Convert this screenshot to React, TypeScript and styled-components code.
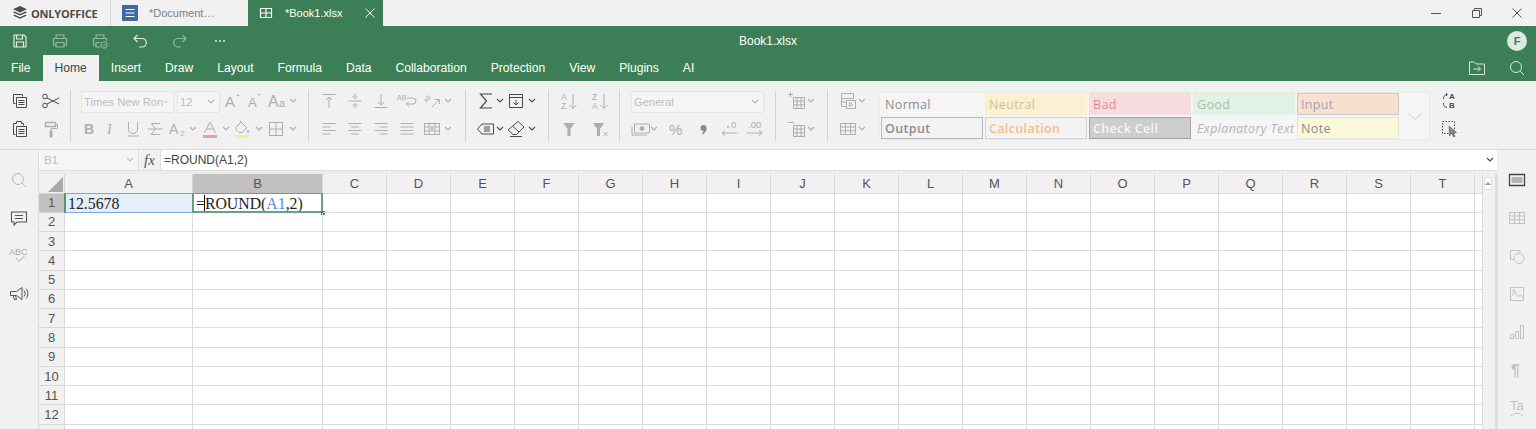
import * as React from "react";
import styled, { createGlobalStyle } from "styled-components";

const green = "#3c7f56";
const panel = "#f1f1f1";
const faded = "#aeaeae";
const dark = "#4a4a4a";

const GlobalStyle = createGlobalStyle`
  html, body { margin: 0; padding: 0; background: #fff; }
  body { font-family: "Liberation Sans", Arial, sans-serif; overflow: hidden; }
  * { box-sizing: border-box; }
`;

const Shell = styled.div`
  width: 1536px;
  height: 429px;
  display: flex;
  flex-direction: column;
  overflow: hidden;
`;

/* window tabs */
const WindowBar = styled.div`
  height: 26px;
  flex: none;
  display: flex;
  background: ${panel};
`;
const Logo = styled.div`
  width: 111px;
  display: flex;
  align-items: center;
  padding-left: 12px;
  gap: 3px;
  border-right: 1px solid #dcdcdc;
  font-size: 11px;
  font-weight: bold;
  color: #4b4b4b;
  font-family: "Open Sans", sans-serif;
  letter-spacing: -0.2px;
`;
const DocTab = styled.div<{ $active?: boolean }>`
  width: ${(p) => (p.$active ? 135 : 137)}px;
  display: flex;
  align-items: center;
  padding-left: 11px;
  gap: ${(p) => (p.$active ? 12 : 11)}px;
  font-size: 11px;
  color: ${(p) => (p.$active ? "#fff" : "#808080")};
  background: ${(p) => (p.$active ? green : panel)};
`;
const TabName = styled.span`
  flex: 1;
`;
const CloseTab = styled.span`
  display: flex;
  margin-right: 7px;
`;
const WinControls = styled.div`
  margin-left: auto;
  display: flex;
  gap: 2.5px;
`;
const WinBtn = styled.div`
  width: 38px;
  display: flex;
  align-items: center;
  justify-content: center;
  color: #555;
`;

/* green header */
const Header = styled.div`
  height: 55px;
  flex: none;
  background: ${green};
  color: #fff;
`;
const QuickRow = styled.div`
  height: 29px;
  display: flex;
  align-items: center;
  position: relative;
`;
const QuickBtn = styled.div<{ $off?: boolean }>`
  width: 40px;
  display: flex;
  justify-content: center;
  color: #fff;
  opacity: ${(p) => (p.$off ? 0.45 : 0.85)};
`;
const DocTitle = styled.div`
  position: absolute;
  left: 0;
  right: 0;
  text-align: center;
  font-size: 12px;
  pointer-events: none;
`;
const Avatar = styled.div`
  margin-left: auto;
  margin-right: 9px;
  width: 20px;
  height: 20px;
  border-radius: 50%;
  background: #dce9e1;
  color: ${green};
  font-size: 11px;
  font-weight: bold;
  display: flex;
  align-items: center;
  justify-content: center;
`;
const MenuRow = styled.div`
  height: 26px;
  display: flex;
  align-items: stretch;
`;
const MenuTab = styled.div<{ $active?: boolean; $first?: boolean }>`
  padding: 0 12px 0 ${(p) => (p.$first ? 11 : 12)}px;
  display: flex;
  align-items: center;
  font-size: 12.1px;
  color: ${(p) => (p.$active ? "#444" : "#fff")};
  background: ${(p) => (p.$active ? panel : "transparent")};
`;
const MenuRight = styled.div`
  margin-left: auto;
  display: flex;
  align-items: center;
  padding-right: 11px;
  gap: 23px;
  opacity: 0.8;
`;

/* toolbar */
const Toolbar = styled.div`
  height: 69px;
  flex: none;
  display: flex;
  padding-top: 6px;
  background: ${panel};
  border-bottom: 1px solid #dcdcdc;
`;
const Group = styled.div<{ $w: number; $pad?: number }>`
  width: ${(p) => p.$w}px;
  flex: none;
  padding-left: ${(p) => p.$pad ?? 0}px;
`;
const ToolRow = styled.div`
  height: 28px;
  display: flex;
  align-items: center;
`;
const Sep = styled.div`
  width: 1px;
  flex: none;
  height: 51px;
  margin-top: 3px;
  background: #d2d2d2;
`;
const Tool = styled.div<{ $w: number; $c?: string }>`
  width: ${(p) => p.$w}px;
  flex: none;
  display: flex;
  justify-content: center;
  align-items: center;
  color: ${(p) => p.$c ?? faded};
  svg { flex: none; }
`;
const Select = styled.div<{ $w: number; $gap?: number; $ml?: number }>`
  width: ${(p) => p.$w}px;
  height: 22px;
  margin: 2px ${(p) => p.$gap ?? 0}px 0 ${(p) => p.$ml ?? 0}px;
  flex: none;
  display: flex;
  align-items: center;
  justify-content: space-between;
  padding: 0 4px 0 2px;
  background: #f5f5f5;
  border: 1px solid #e6e6e6;
  border-radius: 2px;
  font-size: 11.2px;
  color: #bdbdbd;
  white-space: nowrap;
  overflow: hidden;
`;
const Gallery = styled.div`
  width: 551px;
  height: 48px;
  margin: 5px 0 0 2px;
  flex: none;
  display: flex;
  background: #f5f5f5;
  border: 1px solid #e9e9e9;
`;
const StyleGrid = styled.div`
  width: 520px;
  padding: 0 0 0 1px;
  display: grid;
  grid-template-columns: repeat(5, 102px);
  grid-auto-rows: 22px;
  column-gap: 2px;
  row-gap: 2px;
  align-content: center;
`;
const StyleCell = styled.div<{ $bg?: string; $fg: string; $bd?: string; $b?: boolean; $i?: boolean }>`
  display: flex;
  align-items: center;
  padding-left: 3px;
  font-family: "Open Sans", sans-serif;
  font-size: 12.5px;
  letter-spacing: 0.35px;
  white-space: nowrap;
  overflow: hidden;
  background: ${(p) => p.$bg ?? "transparent"};
  color: ${(p) => p.$fg};
  border: 1px solid ${(p) => p.$bd ?? "transparent"};
  font-weight: ${(p) => (p.$b ? 600 : 400)};
  font-style: ${(p) => (p.$i ? "italic" : "normal")};
`;
const GalleryMore = styled.div`
  flex: 1;
  display: flex;
  align-items: center;
  justify-content: center;
  color: #cfcfcf;
`;

/* sheet area */
const Workspace = styled.div`
  flex: 1;
  display: flex;
  min-height: 0;
  background: ${panel};
`;
const Rail = styled.div<{ $w: number; $line?: boolean }>`
  width: ${(p) => p.$w}px;
  flex: none;
  display: flex;
  flex-direction: column;
  align-items: center;
  gap: 18px;
  padding-top: 20px;
  border-right: ${(p) => (p.$line ? "1px solid #dedede" : "none")};
`;
const RailIcon = styled.div<{ $c?: string }>`
  height: 20px;
  display: flex;
  align-items: center;
  color: ${(p) => p.$c ?? "#c2c2c2"};
`;
const Main = styled.div`
  width: 1459px;
  flex: none;
  display: flex;
  flex-direction: column;
`;
const FormulaBar = styled.div`
  height: 21px;
  flex: none;
  display: flex;
  margin-right: 1px;
  background: #fff;
  border-bottom: 1px solid #e0e0e0;
`;
const NameBox = styled.div`
  width: 99px;
  display: flex;
  align-items: center;
  justify-content: space-between;
  padding: 0 4px 0 5px;
  background: #f5f5f5;
  color: #bcbcbc;
  font-size: 11.5px;
`;
const FxBox = styled.div`
  width: 23px;
  display: flex;
  align-items: center;
  justify-content: center;
  background: ${panel};
  border-left: 1px solid #dedede;
  border-right: 1px solid #dedede;
  font-family: "Liberation Serif", serif;
  font-style: italic;
  font-size: 15px;
  color: #555;
`;
const FormulaText = styled.div`
  flex: 1;
  display: flex;
  align-items: center;
  justify-content: space-between;
  padding: 0 3px 0 3px;
  font-size: 12px;
  color: #444;
`;
const Gap = styled.div`
  height: 3px;
  flex: none;
  background: #ececec;
`;
const SheetRow = styled.div`
  flex: 1;
  min-height: 0;
  display: flex;
`;
const Sheet = styled.div`
  width: 1444px;
  flex: none;
  background: #fff;
  overflow: hidden;
`;
const GridRow = styled.div<{ $head?: boolean }>`
  display: flex;
  height: ${(p) => (p.$head ? 19.5 : 19.27)}px;
`;
const HeadCell = styled.div<{ $w: number; $sel?: boolean }>`
  width: ${(p) => p.$w}px;
  flex: none;
  display: flex;
  align-items: center;
  justify-content: center;
  font-size: 13px;
  color: #555;
  background: ${(p) => (p.$sel ? "#c1c1c1" : panel)};
  border-right: 1px solid #d8d8d8;
  border-bottom: 1px solid #d8d8d8;
`;
const Corner = styled(HeadCell)`
  align-items: flex-end;
  justify-content: flex-end;
  padding: 0 1px 1px 0;
`;
const CornerMark = styled.div`
  width: 0;
  height: 0;
  border-style: solid;
  border-width: 0 0 15px 15px;
  border-color: transparent transparent #a9a9a9 transparent;
`;
const Cell = styled.div<{ $w: number }>`
  width: ${(p) => p.$w}px;
  flex: none;
  position: relative;
  border-right: 1px solid #dcdcdc;
  border-bottom: 1px solid #dcdcdc;
  font-family: "Liberation Serif", serif;
  font-size: 15.8px;
  line-height: 19px;
  padding-left: 3px;
  color: #222;
  white-space: nowrap;
`;
const RefCell = styled(Cell)`
  background: #e5eefb;
`;
const RefOutline = styled.div`
  position: absolute;
  inset: -1px -1px -1px -1px;
  border: 1px solid #7ba5ea;
  border-left: 2px solid #5a9474;
  pointer-events: none;
`;
const EditOutline = styled.div`
  position: absolute;
  inset: -1px -1px -1px -1px;
  border: 2px solid #6a9f82;
  border-top-width: 1px;
  pointer-events: none;
`;
const FillHandle = styled.div`
  position: absolute;
  right: -4px;
  bottom: -4px;
  width: 4px;
  height: 4px;
  background: #3c7f56;
`;
const Caret = styled.span`
  display: inline-block;
  position: relative;
  width: 0;
  height: 0;
  &::after {
    content: "";
    position: absolute;
    left: -1px;
    top: -14px;
    width: 1.5px;
    height: 18px;
    background: #111;
  }
`;
const RefText = styled.span`
  color: #5b8fe0;
`;
const ScrollBar = styled.div`
  width: 15px;
  flex: none;
  padding: 3px 3px 0 1px;
  background: ${panel};
  border-right: 3px solid #dedede;
`;
const ScrollUp = styled.div`
  height: 13px;
  background: #fafafa;
  border: 1px solid #e4e4e4;
  display: flex;
  align-items: center;
  justify-content: center;
  &::before {
    content: "";
    border-style: solid;
    border-width: 0 3px 3px 3px;
    border-color: transparent transparent #999 transparent;
  }
`;

/* icons */
const Svg = ({ s = 20, w, children, sw = 1 }: { s?: number; w?: number; children: React.ReactNode; sw?: number }) => (
  <svg width={w ?? s} height={s} viewBox={`0 0 ${w ?? s} ${s}`} fill="none" stroke="currentColor" strokeWidth={sw}>
    {children}
  </svg>
);
const Txt = (p: { x: number; y: number; size: number; children: React.ReactNode; weight?: any; style?: any; family?: string; rotate?: number }) => (
  <text
    x={p.x}
    y={p.y}
    fontSize={p.size}
    fontWeight={p.weight}
    fontStyle={p.style}
    fill="currentColor"
    stroke="none"
    fontFamily={p.family ?? "Liberation Sans"}
    transform={p.rotate ? `rotate(${p.rotate} ${p.x} ${p.y})` : undefined}
  >
    {p.children}
  </text>
);

const Chevron = () => (
  <svg width="8" height="6" viewBox="0 0 8 6" fill="none" stroke="currentColor" strokeWidth="1.1">
    <path d="M1 1l3 3 3-3" />
  </svg>
);
const ChevronTool = styled(Tool).attrs({ children: <Chevron /> })``;

const Icons = {
  layers: (
    <svg width="16" height="16" viewBox="0 0 16 16" fill="#4b4b4b">
      <path d="M8 1l7 3.2L8 7.4 1 4.2z" />
      <path d="M2.6 6.6L8 9l5.4-2.4L15 7.4 8 10.6 1 7.4z" />
      <path d="M2.6 9.8L8 12.2l5.4-2.4 1.6.8L8 13.8 1 10.6z" />
    </svg>
  ),
  docBlue: (
    <svg width="16" height="16" viewBox="0 0 16 16">
      <rect width="16" height="16" rx="1" fill="#42699e" />
      <path d="M3.5 4.5h9M3.5 8h9M3.5 11.5h9" stroke="#fff" strokeWidth="1.2" />
    </svg>
  ),
  bookTable: (
    <Svg s={14}>
      <path d="M1.5 2.5h11v9h-11zM1.5 7h11M7 2.5v9" strokeWidth="1.2" />
    </Svg>
  ),
  x: (
    <Svg s={12}>
      <path d="M1.5 1.5l9 9M10.5 1.5l-9 9" />
    </Svg>
  ),
  min: (
    <Svg s={12}>
      <path d="M1 6.5h10" />
    </Svg>
  ),
  restore: (
    <Svg s={12}>
      <path d="M1.5 3.5h7v7h-7zM3.5 3.5v-2h7v7h-2" />
    </Svg>
  ),
  save: (
    <Svg s={16}>
      <path d="M2 2h10l2 2v10H2zM4.5 2v4h6V2M4.5 14V9h7v5" strokeWidth="1.2" />
    </Svg>
  ),
  print: (
    <Svg s={16}>
      <path d="M4 5V2h8v3M4 12H1.5V5.5h13V12H12M4 9.5h8V14H4z" strokeWidth="1.2" />
    </Svg>
  ),
  qprint: (
    <Svg s={16}>
      <path d="M4 5V2h8v3M4 12H1.5V5.5h13V8M4 9.5h4M4 9.5V14h4" strokeWidth="1.2" />
      <circle cx="12" cy="12" r="3.2" />
      <path d="M10.5 12l1.2 1.2 2-2.2" />
    </Svg>
  ),
  undo: (
    <Svg s={16}>
      <path d="M5.5 2L2 5.5 5.5 9M2 5.5h8a4 4 0 010 8.5H7" strokeWidth="1.2" />
    </Svg>
  ),
  redo: (
    <Svg s={16}>
      <path d="M10.5 2L14 5.5 10.5 9M14 5.5H6a4 4 0 000 8.5h3" strokeWidth="1.2" />
    </Svg>
  ),
  dots: (
    <svg width="12" height="4" viewBox="0 0 12 4" fill="currentColor">
      <circle cx="2" cy="2" r="1" />
      <circle cx="6" cy="2" r="1" />
      <circle cx="10" cy="2" r="1" />
    </svg>
  ),
  folder: (
    <Svg s={18}>
      <path d="M1.5 3h5l1.5 2h8.5v10.5h-15zM5.5 10h7M10 7.5l2.5 2.5-2.5 2.5" />
    </Svg>
  ),
  search: (
    <Svg s={16}>
      <circle cx="7" cy="7" r="5.5" />
      <path d="M11 11l4 4" />
    </Svg>
  ),
  copy: (
    <Svg>
      <path d="M5.5 12.5h-2v-9h9v2" />
      <path d="M6.5 6.5h10v10h-10z" />
      <path d="M8.5 9.5h6M8.5 11.5h6M8.5 13.5h6" />
    </Svg>
  ),
  paste: (
    <Svg>
      <path d="M5.5 15.5h-2v-11h3v-2h5v2h2v2" />
      <path d="M6.5 7.5h10v10h-10z" />
      <path d="M8.5 10.5h6M8.5 12.5h6M8.5 14.5h6" />
    </Svg>
  ),
  scissors: (
    <Svg>
      <circle cx="4" cy="5.5" r="2.3" />
      <circle cx="4" cy="14.5" r="2.3" />
      <path d="M6 7l12 6M6 13l12-6" />
    </Svg>
  ),
  roller: (
    <Svg>
      <path d="M4.5 3.5h10v4h-10z" strokeWidth="1.4" />
      <path d="M14.5 5.5h2v4h-6.5v3" />
      <path d="M9 12h2v6H9z" fill="currentColor" />
    </Svg>
  ),
  growA: (
    <Svg>
      <Txt x={2} y={16} size={15}>A</Txt>
      <path d="M13.5 5h3l-1.5-2z" fill="currentColor" stroke="none" />
    </Svg>
  ),
  shrinkA: (
    <Svg>
      <Txt x={3} y={16} size={13}>A</Txt>
      <path d="M12.5 3h3l-1.5 2z" fill="currentColor" stroke="none" />
    </Svg>
  ),
  changeCase: (
    <Svg>
      <Txt x={1} y={16} size={16}>A</Txt>
      <Txt x={12} y={16} size={11}>a</Txt>
    </Svg>
  ),
  bold: (
    <Svg>
      <Txt x={5} y={15} size={14} weight="bold">B</Txt>
    </Svg>
  ),
  italic: (
    <Svg>
      <Txt x={6} y={15} size={14} style="italic" family="Liberation Serif">I</Txt>
    </Svg>
  ),
  underline: (
    <Svg>
      <path d="M5.5 3v7.5a4.5 4 0 009 0V3M4.5 17h11" />
    </Svg>
  ),
  strike: (
    <Svg>
      <path d="M15 4.5H6.5L10.5 10 6 15.5h9M2.5 10h15" />
    </Svg>
  ),
  sub: (
    <Svg>
      <Txt x={1} y={15} size={14}>A</Txt>
      <Txt x={12} y={17} size={8}>2</Txt>
    </Svg>
  ),
  fontColor: (
    <svg width="20" height="20" viewBox="0 0 20 20" fill="none" stroke="currentColor">
      <path d="M4.5 14L10 3l5.5 11M6.5 10h7" />
      <rect x="3" y="16" width="14" height="3" fill="#f59aa0" stroke="none" />
    </svg>
  ),
  fillColor: (
    <svg width="20" height="20" viewBox="0 0 20 20" fill="none" stroke="currentColor">
      <path d="M9 3l6 6-5 4.5H7L4 10.5V8.5zM8 1.5l2 2.5" />
      <circle cx="16" cy="12.5" r="1.3" fill="currentColor" stroke="none" />
      <rect x="3" y="16" width="14" height="3" fill="#f4f08a" stroke="none" />
    </svg>
  ),
  borders: (
    <Svg>
      <path d="M3.5 3.5h13v13h-13zM10 3.5v13M3.5 10h13" />
    </Svg>
  ),
  alignTop: (
    <Svg>
      <path d="M3.5 3.5h13M10 17V6.5M7 9l3-3 3 3" />
    </Svg>
  ),
  alignMid: (
    <Svg>
      <path d="M3.5 10h13M10 2.5V7M7.5 5l2.5 2.5L12.5 5M10 17.5V13M7.5 15l2.5-2.5 2.5 2.5" />
    </Svg>
  ),
  alignBot: (
    <Svg>
      <path d="M3.5 16.5h13M10 3v10.5M7 11l3 3 3-3" />
    </Svg>
  ),
  wrap: (
    <Svg>
      <Txt x={0} y={9} size={7}>AB</Txt>
      <path d="M10 7h6a2.5 2.5 0 010 6H9.5M12 10.5L9.5 13l2.5 2.5" />
    </Svg>
  ),
  orient: (
    <Svg>
      <Txt x={4} y={12} size={7} rotate={-45}>ab</Txt>
      <path d="M10 16l7-7M13 8.500h4.500V13" />
    </Svg>
  ),
  left: (
    <Svg>
      <path d="M3.5 4.5h13M3.5 8h8M3.5 11.5h13M3.5 15h8" />
    </Svg>
  ),
  center: (
    <Svg>
      <path d="M3.5 4.5h13M6 8h8M3.5 11.5h13M6 15h8" />
    </Svg>
  ),
  right: (
    <Svg>
      <path d="M3.5 4.5h13M8.5 8h8M3.5 11.5h13M8.5 15h8" />
    </Svg>
  ),
  justify: (
    <Svg>
      <path d="M3.5 4.5h13M3.5 8h13M3.5 11.5h13M3.5 15h13" />
    </Svg>
  ),
  merge: (
    <Svg>
      <path d="M2.5 4.5h15v11h-15zM2.5 8h15M2.5 12h15M7 4.5V8M13 4.5V8M7 12v3.5M13 12v3.5M6 10h8" />
    </Svg>
  ),
  sigma: (
    <Svg>
      <path d="M15 4V3H4.5l6 7-6 7H15v-1" strokeWidth="1.2" />
    </Svg>
  ),
  fill: (
    <Svg>
      <path d="M3.5 3.5h13v13h-13zM3.5 6.5h13M10 9v5M7.5 11.5l2.5 2.5 2.5-2.5" />
    </Svg>
  ),
  tag: (
    <Svg>
      <path d="M6 5h11.5v10H6L1.5 10zM8 8h6M8 10h6M8 12h6" />
    </Svg>
  ),
  eraser: (
    <Svg>
      <path d="M12 2.5l6 5.5-7.5 7.5H7L2 11zM7 7.5l6 5.5M4 17.5h12" />
    </Svg>
  ),
  sortAZ: (
    <Svg>
      <Txt x={1} y={9} size={8.5}>A</Txt>
      <Txt x={1} y={18} size={8.5}>Z</Txt>
      <path d="M13 3v14M9.5 14l3.5 3.5 3.5-3.5" />
    </Svg>
  ),
  sortZA: (
    <Svg>
      <Txt x={1} y={9} size={8.5}>Z</Txt>
      <Txt x={1} y={18} size={8.5}>A</Txt>
      <path d="M13 3v14M9.5 14l3.5 3.5 3.5-3.5" />
    </Svg>
  ),
  funnel: (
    <svg width="20" height="20" viewBox="0 0 20 20" fill="currentColor">
      <path d="M3.5 4h11L10.5 10v7h-3v-7z" />
    </svg>
  ),
  funnelX: (
    <svg width="20" height="20" viewBox="0 0 20 20" fill="currentColor">
      <path d="M2 4h11L9 10v7H6v-7z" />
      <path d="M12.5 13l4 4M16.5 13l-4 4" stroke="currentColor" fill="none" />
    </svg>
  ),
  money: (
    <Svg>
      <path d="M4.5 5h15v9h-15z" />
      <path d="M2 7.5V16h15" />
      <circle cx="12" cy="9.5" r="2" fill="currentColor" />
    </Svg>
  ),
  percent: (
    <Svg>
      <Txt x={2} y={15.5} size={15}>%</Txt>
    </Svg>
  ),
  comma: (
    <svg width="20" height="20" viewBox="0 0 20 20" fill="currentColor">
      <circle cx="10.5" cy="9" r="3" />
      <path d="M13.5 9c0 3-2 5.5-4 6.5l-.5-1c1.5-1 1.5-2.5 1.5-3z" />
    </svg>
  ),
  decDec: (
    <Svg s={20} w={22}>
      <Txt x={12} y={9} size={9.5}>0</Txt>
      <circle cx="9" cy="8" r=".6" fill="currentColor" />
      <path d="M18 14H3M6 11.5L3 14l3 2.5" />
    </Svg>
  ),
  incDec: (
    <Svg s={20} w={22}>
      <Txt x={4} y={9} size={9.5}>.00</Txt>
      <path d="M3 14h15M15 11.5l3 2.5-3 2.5" />
    </Svg>
  ),
  insert: (
    <Svg>
      <path d="M6.5 6.5h11v11h-11zM6.5 10h11M6.5 13.8h11M10 6.5v11M14 6.5v11M1 3.5h5M3.5 1v5" />
    </Svg>
  ),
  remove: (
    <Svg>
      <path d="M6.5 6.5h11v11h-11zM6.5 10h11M6.5 13.8h11M10 6.5v11M14 6.5v11M1 3.5h6" />
    </Svg>
  ),
  cond: (
    <Svg>
      <path d="M3.5 2.5h12v5h-12zM3.5 7.5v8h5" />
      <path d="M3.5 11h5" />
      <path d="M8.5 9.5h9v8h-9zM11.5 11.5l3 2-3 2z" />
    </Svg>
  ),
  table: (
    <Svg>
      <path d="M2.5 4.5h15v11h-15zM2.5 8h15M2.5 11.8h15M7.5 4.5v11M12.5 4.5v11" />
    </Svg>
  ),
  caseSwap: (
    <Svg>
      <path d="M7 3.5C4.5 4 3 6 3.5 8M7 16.5C4.5 16 3 14 3.5 12M6 2l1.5 1.5L6 5" />
      <Txt x={9} y={8} size={8} weight="bold">A</Txt>
      <Txt x={9} y={17} size={8} weight="bold">B</Txt>
    </Svg>
  ),
  selectAll: (
    <svg width="20" height="20" viewBox="0 0 20 20" fill="none" stroke="currentColor">
      <path d="M2.5 2.5h12v12h-12z" strokeDasharray="1.5 1.5" />
      <path d="M9 7l7.5 6.5-3.2.3 1.8 3.5-1.5.7-1.7-3.5L9.5 17z" fill="#888" stroke="#555" strokeWidth=".6" />
    </svg>
  ),
  comment: (
    <Svg>
      <path d="M2.5 4h15v10H8l-3 3v-3H2.5zM6 7.5h8M6 10.5h8" strokeWidth="1.1" />
    </Svg>
  ),
  spell: (
    <Svg>
      <Txt x={0} y={9} size={9}>ABC</Txt>
      <path d="M7 12l3 3.5 5.5-5.5" />
    </Svg>
  ),
  megaphone: (
    <Svg>
      <path d="M1.5 7.5h6L13 3.5v12L7.5 11.5h-6zM4 11.5l1.5 4h2L6.5 11.5" />
      <path d="M15 6.5c1.5 1.5 1.5 4.5 0 6M17 4.5c2.5 3 2.5 7.5 0 10" />
    </Svg>
  ),
  cellPanel: (
    <Svg>
      <path d="M2.5 4.5h15v11h-15z" strokeWidth="1.3" />
      <path d="M5 7.5h10v5H5z" fill="currentColor" opacity=".35" />
    </Svg>
  ),
  tablePanel: (
    <Svg>
      <path d="M2.5 4.5h15v11h-15zM2.5 8h15M2.5 11.8h15M7.5 4.5v11M12.5 4.5v11" />
    </Svg>
  ),
  shapes: (
    <Svg>
      <path d="M8 13.5H3.5v-9H13V8" />
      <circle cx="12" cy="12.5" r="5" />
    </Svg>
  ),
  image: (
    <Svg>
      <path d="M3.5 3.5h13v13h-13zM3.5 13l4-4 4 3.5 2-1.5 3 3" />
      <circle cx="7" cy="7" r="1.2" />
    </Svg>
  ),
  chart: (
    <Svg>
      <path d="M3.5 12.5h3v4h-3zM8.5 9.5h3v7h-3zM13.5 3.5h3v13h-3z" />
    </Svg>
  ),
  para: (
    <Svg>
      <Txt x={4} y={16} size={16} weight="bold">¶</Txt>
    </Svg>
  ),
  textArt: (
    <Svg>
      <Txt x={3} y={12} size={13}>Ta</Txt>
      <path d="M4 18c3-3.5 9-3.5 12 0" />
    </Svg>
  ),
};

type IconName = keyof typeof Icons;

const T = ({ w, i, c }: { w: number; i: IconName; c?: string }) => (
  <Tool $w={w} $c={c}>
    {Icons[i]}
  </Tool>
);

const menuItems = ["File", "Home", "Insert", "Draw", "Layout", "Formula", "Data", "Collaboration", "Protection", "View", "Plugins", "AI"];
const columns = "CDEFGHIJKLMNOPQRST".split("");
const rowCount = 13;
const leftRail: IconName[] = ["search", "comment", "spell", "megaphone"];
const rightRail: IconName[] = ["tablePanel", "shapes", "image", "chart", "para", "textArt"];

const cellStyles: any[] = [
  { n: "Normal", fg: "#8d8d8d" },
  { n: "Neutral", fg: "#d3c08e", bg: "#faf0d2" },
  { n: "Bad", fg: "#dc8d94", bg: "#f8dde0" },
  { n: "Good", fg: "#9cc3a4", bg: "#e1f1e5" },
  { n: "Input", fg: "#a6a0b8", bg: "#f7e0cd", bd: "#c9c9c9" },
  { n: "Output", fg: "#8c8c8c", bg: "#f3f3f3", bd: "#bababa", b: true },
  { n: "Calculation", fg: "#f6bd88", bg: "#f3f3f3", bd: "#d4d4d4", b: true },
  { n: "Check Cell", fg: "#f6f6f6", bg: "#cdcdcd", bd: "#a4a4a4", b: true },
  { n: "Explanatory Text", fg: "#b4b4b4", i: true },
  { n: "Note", fg: "#8c8c8c", bg: "#fafad8", bd: "#e4e4e4" },
];

const App = () => (
  <React.Fragment>
    <GlobalStyle />
    <Shell>
      <WindowBar>
        <Logo>
          {Icons.layers}
          ONLYOFFICE
        </Logo>
        <DocTab>
          {Icons.docBlue}
          <TabName>*Document…</TabName>
        </DocTab>
        <DocTab $active>
          {Icons.bookTable}
          <TabName>*Book1.xlsx</TabName>
          <CloseTab>{Icons.x}</CloseTab>
        </DocTab>
        <WinControls>
          <WinBtn>{Icons.min}</WinBtn>
          <WinBtn>{Icons.restore}</WinBtn>
          <WinBtn>{Icons.x}</WinBtn>
        </WinControls>
      </WindowBar>

      <Header>
        <QuickRow>
          <QuickBtn>{Icons.save}</QuickBtn>
          <QuickBtn $off>{Icons.print}</QuickBtn>
          <QuickBtn $off>{Icons.qprint}</QuickBtn>
          <QuickBtn>{Icons.undo}</QuickBtn>
          <QuickBtn $off>{Icons.redo}</QuickBtn>
          <QuickBtn>{Icons.dots}</QuickBtn>
          <DocTitle>Book1.xlsx</DocTitle>
          <Avatar>F</Avatar>
        </QuickRow>
        <MenuRow>
          {menuItems.map((m, i) => (
            <MenuTab key={m} $first={i === 0} $active={m === "Home"}>
              {m}
            </MenuTab>
          ))}
          <MenuRight>
            {Icons.folder}
            {Icons.search}
          </MenuRight>
        </MenuRow>
      </Header>

      <Toolbar>
        <Group $w={70} $pad={4}>
          <ToolRow>
            <T w={31} i="copy" c={dark} />
            <T w={31} i="scissors" c={dark} />
          </ToolRow>
          <ToolRow>
            <T w={31} i="paste" c={dark} />
            <T w={31} i="roller" />
          </ToolRow>
        </Group>
        <Sep />
        <Group $w={237} $pad={7}>
          <ToolRow>
            <Select $w={93} $ml={3} $gap={3}>
              Times New Ron
              <Chevron />
            </Select>
            <Select $w={43}>
              12
              <Chevron />
            </Select>
            <T w={25} i="growA" />
            <T w={20} i="shrinkA" />
            <T w={24} i="changeCase" />
            <ChevronTool $w={8} />
          </ToolRow>
          <ToolRow>
            <T w={22} i="bold" />
            <T w={22} i="italic" />
            <T w={22} i="underline" />
            <T w={22} i="strike" />
            <T w={23} i="sub" />
            <ChevronTool $w={8} />
            <T w={26} i="fontColor" />
            <ChevronTool $w={6} />
            <T w={26} i="fillColor" />
            <ChevronTool $w={8} />
            <T w={26} i="borders" />
            <ChevronTool $w={8} />
          </ToolRow>
        </Group>
        <Sep />
        <Group $w={156} $pad={7}>
          <ToolRow>
            <T w={26} i="alignTop" />
            <T w={26} i="alignMid" />
            <T w={26} i="alignBot" />
            <T w={26} i="wrap" />
            <T w={24} i="orient" />
            <ChevronTool $w={8} />
          </ToolRow>
          <ToolRow>
            <T w={26} i="left" />
            <T w={26} i="center" />
            <T w={26} i="right" />
            <T w={26} i="justify" />
            <T w={24} i="merge" />
            <ChevronTool $w={8} />
          </ToolRow>
        </Group>
        <Sep />
        <Group $w={82} $pad={9}>
          <ToolRow>
            <T w={21} i="sigma" c={dark} />
            <ChevronTool $w={8} $c={dark} />
            <T w={24} i="fill" c={dark} />
            <ChevronTool $w={8} $c={dark} />
          </ToolRow>
          <ToolRow>
            <T w={21} i="tag" c={dark} />
            <ChevronTool $w={8} $c={dark} />
            <T w={24} i="eraser" c={dark} />
            <ChevronTool $w={8} $c={dark} />
          </ToolRow>
        </Group>
        <Sep />
        <Group $w={70} $pad={6}>
          <ToolRow>
            <T w={30} i="sortAZ" />
            <T w={32} i="sortZA" />
          </ToolRow>
          <ToolRow>
            <T w={30} i="funnel" />
            <T w={32} i="funnelX" />
          </ToolRow>
        </Group>
        <Sep />
        <Group $w={155} $pad={11}>
          <ToolRow>
            <Select $w={133}>
              General
              <Chevron />
            </Select>
          </ToolRow>
          <ToolRow>
            <T w={18} i="money" />
            <ChevronTool $w={10} />
            <T w={36} i="percent" />
            <T w={16} i="comma" c="#8a8a8a" />
            <T w={38} i="decDec" />
            <T w={12} i="incDec" />
          </ToolRow>
        </Group>
        <Sep />
        <Group $w={51} $pad={10}>
          <ToolRow>
            <T w={21} i="insert" />
            <ChevronTool $w={8} />
          </ToolRow>
          <ToolRow>
            <T w={21} i="remove" />
            <ChevronTool $w={8} />
          </ToolRow>
        </Group>
        <Sep />
        <Group $w={49} $pad={9}>
          <ToolRow>
            <T w={21} i="cond" />
            <ChevronTool $w={8} />
          </ToolRow>
          <ToolRow>
            <T w={21} i="table" />
            <ChevronTool $w={8} />
          </ToolRow>
        </Group>
        <Gallery>
          <StyleGrid>
            {cellStyles.map((s) => (
              <StyleCell key={s.n} $fg={s.fg} $bg={s.bg} $bd={s.bd} $b={s.b} $i={s.i}>
                {s.n}
              </StyleCell>
            ))}
          </StyleGrid>
          <GalleryMore>
            <svg width="16" height="9" viewBox="0 0 16 9" fill="none" stroke="currentColor">
              <path d="M1 1l7 6.500L15 1" />
            </svg>
          </GalleryMore>
        </Gallery>
        <Group $w={50} $pad={9}>
          <ToolRow>
            <T w={22} i="caseSwap" c={dark} />
          </ToolRow>
          <ToolRow>
            <T w={22} i="selectAll" c={dark} />
          </ToolRow>
        </Group>
      </Toolbar>

      <Workspace>
        <Rail $w={39} $line>
          {leftRail.map((r, i) => (
            <RailIcon key={r} $c={i === 0 ? "#b5b5b5" : i === 2 ? "#aaa" : "#555"}>
              {Icons[r]}
            </RailIcon>
          ))}
        </Rail>
        <Main>
          <FormulaBar>
            <NameBox>
              B1
              <Chevron />
            </NameBox>
            <FxBox>fx</FxBox>
            <FormulaText>
              =ROUND(A1,2)
              <Chevron />
            </FormulaText>
          </FormulaBar>
          <Gap />
          <SheetRow>
            <Sheet>
              <GridRow $head>
                <Corner $w={26}>
                  <CornerMark />
                </Corner>
                <HeadCell $w={128}>A</HeadCell>
                <HeadCell $w={130} $sel>
                  B
                </HeadCell>
                {columns.map((c) => (
                  <HeadCell key={c} $w={64}>
                    {c}
                  </HeadCell>
                ))}
                <HeadCell $w={8} />
              </GridRow>
              {Array.from({ length: rowCount }, (_, r) => (
                <GridRow key={r}>
                  <HeadCell $w={26} $sel={r === 0}>
                    {r < 12 ? r + 1 : ""}
                  </HeadCell>
                  {r === 0 ? (
                    <React.Fragment>
                      <RefCell $w={128}>
                        12.5678
                        <RefOutline />
                      </RefCell>
                      <Cell $w={130}>
                        =<Caret />
                        ROUND(<RefText>A1</RefText>,2)
                        <EditOutline>
                          <FillHandle />
                        </EditOutline>
                      </Cell>
                    </React.Fragment>
                  ) : (
                    <React.Fragment>
                      <Cell $w={128} />
                      <Cell $w={130} />
                    </React.Fragment>
                  )}
                  {columns.map((c) => (
                    <Cell key={c} $w={64} />
                  ))}
                  <Cell $w={8} />
                </GridRow>
              ))}
            </Sheet>
            <ScrollBar>
              <ScrollUp />
            </ScrollBar>
          </SheetRow>
        </Main>
        <Rail $w={38}>
          <RailIcon $c="#444">{Icons.cellPanel}</RailIcon>
          {rightRail.map((r) => (
            <RailIcon key={r}>{Icons[r]}</RailIcon>
          ))}
        </Rail>
      </Workspace>
    </Shell>
  </React.Fragment>
);

export default App;
